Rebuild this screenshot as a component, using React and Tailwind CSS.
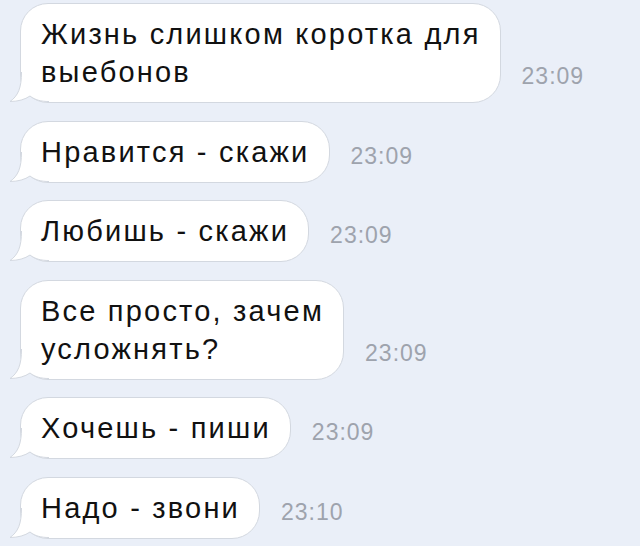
const messages = [
  { lines: ["Жизнь слишком коротка для", "выебонов"], time: "23:09" },
  { lines: ["Нравится - скажи"], time: "23:09" },
  { lines: ["Любишь - скажи"], time: "23:09" },
  { lines: ["Все просто, зачем", "усложнять?"], time: "23:09" },
  { lines: ["Хочешь - пиши"], time: "23:09" },
  { lines: ["Надо - звони"], time: "23:10" },
];

function Tail() {
  return (
    <svg className="absolute -left-[12px] bottom-0 h-[30px] w-[40px]" viewBox="0 0 40 30">
      <path d="M12.5 0 C12.5 16 9 24 1 29.5 C9 29.5 16 27.5 21 24 C26 28 32 29.5 40 29.5 L40 0 Z" fill="#ffffff" />
      <path d="M12.5 0 C12.5 16 9 24 1 29.5 C9 29.5 16 27.5 21 24 C26 28 32 29.5 40 29.5" fill="none" stroke="#d3d8e0" strokeWidth="1" />
    </svg>
  );
}

function Message({ lines, time }) {
  return (
    <div className="flex items-end">
      <div className="relative rounded-[28px] border border-[#d3d8e0] bg-white py-[11px] pl-5 pr-[19px] text-[29px] leading-[38px] tracking-[2.2px] text-[#111]">
        <Tail />
        <p className="relative">
          {lines.map((l, i) => (
            <span key={i}>
              {l}
              {i < lines.length - 1 && <br />}
            </span>
          ))}
        </p>
      </div>
      <span className="mb-[15px] ml-[21px] text-[23px] leading-[24px] tracking-[1px] text-[#9ea3ad]">{time}</span>
    </div>
  );
}

export default function App() {
  return (
    <div
      className="h-[546px] w-[640px] overflow-hidden bg-[#eaeff8] pl-5 pt-[3px]"
      style={{ fontFamily: '"Liberation Sans", Arial, sans-serif' }}
    >
      <div className="flex flex-col gap-[17.5px]">
        {messages.map((m, i) => (
          <Message key={i} {...m} />
        ))}
      </div>
    </div>
  );
}
